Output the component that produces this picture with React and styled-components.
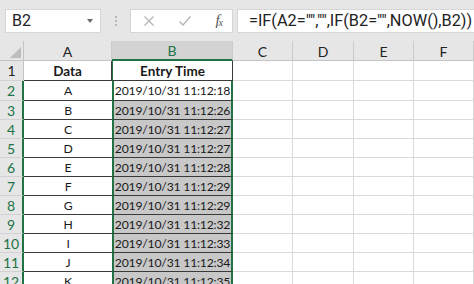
import React from "react";
import styled, { createGlobalStyle } from "styled-components";

const Global = createGlobalStyle`
  html, body { margin: 0; padding: 0; background: #fff; }
  body { font-family: "Lato", "Noto Sans", sans-serif; }
`;

const GREEN = "#217346";

const Page = styled.div`
  width: 474px;
  height: 284px;
  overflow: hidden;
  background: #fff;
`;

const Toolbar = styled.div`
  height: 41px;
  background: #e6e6e6;
  display: flex;
  align-items: center;
  padding: 0 0 0 5px;
  box-sizing: border-box;
`;

const NameBox = styled.div`
  width: 96px;
  height: 24px;
  box-sizing: border-box;
  background: #fff;
  border: 1px solid #d6d6d6;
  display: flex;
  align-items: center;
  justify-content: space-between;
  padding: 0 7px 0 6px;
  font-family: "Roboto", "Liberation Sans", sans-serif;
  font-size: 16px;
  color: #222;
`;

const Caret = styled.span`
  width: 0;
  height: 0;
  border-left: 3.5px solid transparent;
  border-right: 3.5px solid transparent;
  border-top: 4px solid #6a6a6a;
`;

const Grip = styled.div`
  width: 29px;
  display: flex;
  flex-direction: column;
  align-items: center;
  gap: 2px;
  span {
    width: 2px;
    height: 2px;
    border-radius: 1px;
    background: #a8a8a8;
  }
`;

const FxBox = styled.div`
  width: 103px;
  height: 24px;
  box-sizing: border-box;
  background: #fff;
  border: 1px solid #d6d6d6;
  display: flex;
  align-items: center;
  justify-content: space-between;
  padding: 0 10px 0 12px;
`;

const Fx = styled.span`
  font-family: "Liberation Serif", serif;
  font-style: italic;
  font-size: 15px;
  color: #555;
  letter-spacing: -1px;
  sub {
    font-size: 10px;
    vertical-align: -1px;
  }
`;

const FormulaBar = styled.div`
  flex: 1;
  margin-left: 4px;
  height: 24px;
  box-sizing: border-box;
  background: #fff;
  border: 1px solid #d6d6d6;
  border-right: none;
  display: flex;
  align-items: center;
  padding-left: 11px;
  font-family: "Roboto", "Liberation Sans", sans-serif;
  font-size: 16.3px;
  color: #222;
  white-space: nowrap;
  overflow: hidden;
`;

const Sheet = styled.div`
  display: grid;
  grid-template-columns: 24px 88px 121px 60px 61px 60px 1fr;
  grid-template-rows: 20px 20px 20px repeat(10, 19px);
`;

const Corner = styled.div`
  background: #e6e6e6;
  border-right: 1px solid #c4c4c4;
  border-bottom: 1px solid #c4c4c4;
  box-sizing: border-box;
  display: flex;
  align-items: flex-end;
  justify-content: flex-end;
  padding: 0 2px 2px 0;
`;

const CornerTri = styled.span`
  width: 0;
  height: 0;
  border-left: 11px solid transparent;
  border-bottom: 11px solid #bdbdbd;
`;

const ColHead = styled.div`
  box-sizing: border-box;
  background: ${(p) => (p.$active ? "#d3d3d3" : "#e6e6e6")};
  color: ${(p) => (p.$active ? GREEN : "#222")};
  border-right: 1px solid #cbcbcb;
  border-bottom: ${(p) => (p.$active ? `2px solid ${GREEN}` : "1px solid #c4c4c4")};
  display: flex;
  align-items: center;
  justify-content: center;
  font-size: 14px;
  padding-top: 1px;
`;

const RowHead = styled.div`
  box-sizing: border-box;
  background: #e6e6e6;
  color: ${(p) => (p.$active ? GREEN : "#222")};
  border-right: ${(p) => (p.$active ? `2px solid ${GREEN}` : "1px solid #c4c4c4")};
  border-bottom: 1px solid #d2d2d2;
  display: flex;
  align-items: center;
  justify-content: center;
  font-size: 14px;
`;

const Cell = styled.div`
  box-sizing: border-box;
  background: ${(p) => (p.$shade ? "#c8c8c8" : "#fff")};
  color: #1a1a1a;
  border-bottom: 1px solid #3a3a3a;
  border-left: ${(p) => p.$left || "none"};
  border-right: ${(p) => p.$right || "none"};
  display: flex;
  align-items: center;
  justify-content: center;
  font-size: ${(p) => (p.$bold ? "13.5px" : "12.2px")};
  letter-spacing: ${(p) => (p.$bold ? "0" : "-0.2px")};
  font-weight: ${(p) => (p.$bold ? 700 : 400)};
  white-space: nowrap;
  overflow: hidden;
`;

const Blank = styled.div`
  box-sizing: border-box;
  border-right: 1px solid #dadada;
  border-bottom: 1px solid #dadada;
`;

const Cross = () => (
  <svg width="12" height="12" viewBox="0 0 12 12">
    <path d="M1.5 1.5 L10.5 10.5 M10.5 1.5 L1.5 10.5" stroke="#b4b4b4" strokeWidth="1.3" fill="none" />
  </svg>
);

const Check = () => (
  <svg width="14" height="12" viewBox="0 0 14 12">
    <path d="M1.5 6.5 L5 10 L12.5 1.5" stroke="#b4b4b4" strokeWidth="1.4" fill="none" />
  </svg>
);

const letters = ["A", "B", "C", "D", "E", "F", "G", "H", "I", "J", "K"];
const times = ["18", "26", "27", "27", "28", "29", "29", "32", "33", "34", "35"];

export default function App() {
  const sel = `2px solid ${GREEN}`;
  return (
    <Page>
      <Global />
      <Toolbar>
        <NameBox>
          <span>B2</span>
          <Caret />
        </NameBox>
        <Grip>
          <span />
          <span />
          <span />
        </Grip>
        <FxBox>
          <Cross />
          <Check />
          <Fx>
            f<sub>x</sub>
          </Fx>
        </FxBox>
        <FormulaBar>=IF(A2="","",IF(B2="",NOW(),B2))</FormulaBar>
      </Toolbar>
      <Sheet>
        <Corner>
          <CornerTri />
        </Corner>
        {["A", "B", "C", "D", "E", "F"].map((c) => (
          <ColHead key={c} $active={c === "B"}>
            {c}
          </ColHead>
        ))}

        <RowHead>1</RowHead>
        <Cell $bold $right="1px solid #3a3a3a">Data</Cell>
        <Cell $bold $left={`1px solid ${GREEN}`} $right="1px solid #3a3a3a">
          Entry Time
        </Cell>
        <Blank />
        <Blank />
        <Blank />
        <Blank />

        {letters.map((l, i) => (
          <React.Fragment key={l}>
            <RowHead $active>{i + 2}</RowHead>
            <Cell>{l}</Cell>
            <Cell $shade={i > 0} $left={sel} $right={sel}>
              2019/10/31 11:12:{times[i]}
            </Cell>
            <Blank />
            <Blank />
            <Blank />
            <Blank />
          </React.Fragment>
        ))}
      </Sheet>
    </Page>
  );
}
